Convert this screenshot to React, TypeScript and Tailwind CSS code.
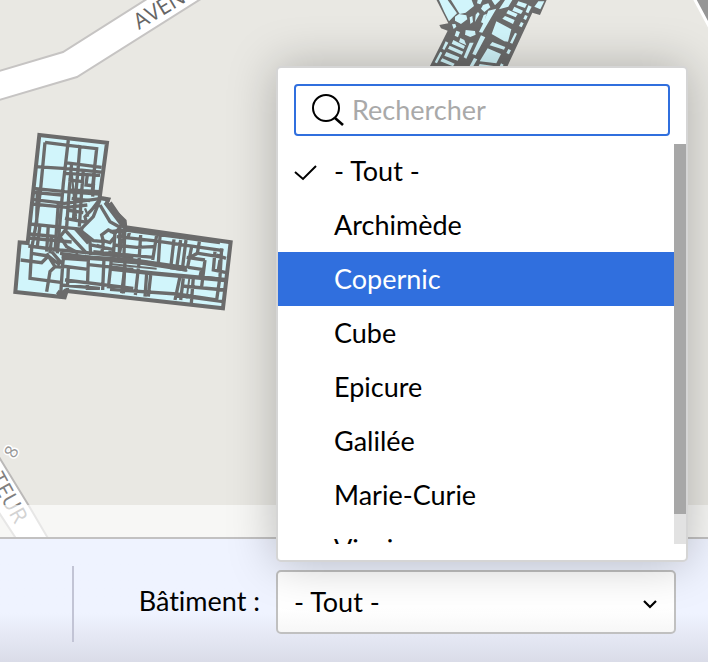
import { useState } from "react";

const BUILDINGS = ["- Tout -", "Archimède", "Copernic", "Cube", "Epicure", "Galilée", "Marie-Curie", "Vinci"];

function CampusMap() {
  return (
    <svg
      className="absolute inset-0 h-full w-full"
      viewBox="0 0 708 537"
      preserveAspectRatio="xMinYMin slice"
      role="img"
      aria-label="Plan du campus"
    >
      <rect width="708" height="537" fill="#e9e8e3" />

      {/* Roads */}
      <path d="M-4 72 63 52 150 -3 204 -3 77 77 -4 101Z" fill="#fff" stroke="#c6c4c3" strokeWidth="2" />
      <path d="M-4 452 29 506 49 540 17 540 -4 508Z" fill="#fff" stroke="#bbb9b8" strokeWidth="2" />
      <path d="M694 -2 710 28 710 -2Z" fill="#969696" stroke="#fff" strokeWidth="3" />
      <g className="font-['Open_Sans']">
        <text x="139" y="30" fontSize="22" fill="#666" transform="rotate(-31 139 30)">AVENUE</text>
        <text x="15" y="525" fontSize="22" fill="#808080" textAnchor="end" transform="rotate(61 15 525)">TEUR</text>
        <text x="10" y="457" fontSize="18" fill="#999" stroke="#fff" strokeWidth="3" paintOrder="stroke" transform="rotate(-62 10 457) translate(0 5)">8</text>
      </g>

      {/* West building */}
      <g transform="translate(0 120) scale(.3333)" stroke="#6b6b6b" strokeWidth="10" fill="none">
        <path
          d="M118 45 321 68 299 233 325 238 320 250 374 303 376 322 692 367 669 565 330 527 200 513 194 532 46 516 59 367 83 369Z"
          fill="#d1f5fb"
          strokeWidth="12"
        />
        <path d="M135 67 205 76 290 86 283 150 278 230M135 67 122 205 108 315 95 385 90 475 182 487M205 60 190 190 172 400M240 75 234 150 220 300M105 140 200 146 312 157M195 128 305 142M195 160 300 166M100 205 195 215 298 222M100 217 185 225M95 238 195 250 300 236M95 252 200 262 262 255M112 210 110 310M88 312 190 322 250 328M88 342 170 350M85 354 215 366M85 378 180 390 400 412" />
        <path d="M215 130 208 205 200 320M250 150 244 230 238 320M205 180 250 185M210 210 298 215M262 165 258 195 285 198M282 160 276 225M215 235 270 242M200 270 250 278M195 295 265 308M120 315 112 378M145 315 140 395M155 350 150 400M175 250 165 395" />
        <path d="M298 240 275 270 255 290 260 310 240 330 270 365 272 405M300 240 280 290 260 310M300 255 330 305 360 322 345 340 325 330 305 345 310 362 330 368 345 350M315 248 365 315M355 300 375 322M330 240 300 235M240 330 280 362 315 365M200 325 180 350 200 380 235 400M225 325 265 370M192 327 260 400M345 335 340 410M272 375 345 390M280 395 400 408M310 365 305 405M360 325 358 400M375 320 372 400" />
        <path d="M62 420 125 428 145 408 180 435M145 408 95 400M155 395 185 430M140 400 165 440 150 455 140 515M165 440 190 442M192 400 188 435 182 525M192 415 265 420 262 510M265 434 400 448M205 445 202 510M195 480 400 505M182 495 300 505M312 415 308 510M335 410 325 505M375 440 365 520M185 438 265 448M180 400 272 412" />
        <path d="M185 408 400 422 560 445M172 515 192 530M175 530 200 510" strokeWidth="14" />
        <path d="M215 160 228 290M225 260 228 300M255 265 265 290M290 375 315 382M325 395 350 400" strokeWidth="7" />
      </g>
      <g transform="translate(110 180) scale(.3333)" stroke="#6b6b6b" strokeWidth="10" fill="none">
        <path d="M0 68 42 130 40 145" strokeWidth="12" />
        <path d="M0 155 45 150 330 188M20 170 130 182 340 212M0 220 130 232M10 195 80 202 130 200M40 155 25 240M60 150 55 170M92 165 86 260M140 165 128 240M150 168 145 250M192 178 182 265M212 180 200 265M228 180 218 260M268 185 262 220 235 235M245 200 232 265" />
        <path d="M0 240 100 248 230 268" strokeWidth="14" />
        <path d="M0 266 130 280 345 300" strokeWidth="13" />
        <path d="M45 245 40 340M85 265 76 345M110 280 105 350M122 285 115 350M210 290 195 360M220 295 212 360M250 292 244 370M0 328 200 342 320 360M195 345 340 365M215 318 345 330M335 205 330 290 320 360M315 215 310 270 350 278M320 225 348 235M285 240 275 320M230 232 285 240M235 262 275 268 270 290 345 300M330 240 325 270M265 220 340 232" />
        <path d="M90 250 230 262M0 252 140 266M180 265 232 272M238 295 230 355" strokeWidth="6" />
      </g>

      {/* North building: dark walls with the rooms laid over them */}
      <g transform="translate(425 0) scale(.3333)">
        <path d="M32 -5 70 70 43 75 48 85 68 92 12 204 245 204 322 38 345 45 367 -5Z" fill="#6b6b6b" />
        <path
          fill="#d1f5fb"
          d="M42 0 68 0 96 40 72 64 58 36Z
            M78 0 140 0 147 18 122 38 104 42Z
            M90 50 102 42 124 46 127 58 108 72 90 62Z
            M158 0 172 0 166 13 156 10Z
            M174 15 190 10 196 22 178 36 168 26Z
            M190 32 214 26 200 50 172 98 162 96 172 76Z
            M200 0 226 0 210 16Z M240 0 262 0 250 20 222 28Z
            M214 64 259 88 249 125 238 124 200 102Z
            M188 145 228 162 214 190 164 184Z
            M250 30 278 42 272 52 244 40Z M240 48 269 60 264 72 232 56Z
            M280 4 306 12 300 24 274 15Z M268 20 294 32 288 42 262 32Z
            M340 4 358 4 346 28 328 20Z M310 16 320 20 310 40 302 36Z
            M300 45 308 48 303 60 295 56Z M288 66 296 70 290 82 282 78Z
            M270 98 276 101 262 131 255 128Z M250 147 258 151 252 163 244 159Z
            M202 126 241 141 237 149 194 136Z
            M94 92 105 96 99 112 89 107Z M122 90 150 93 152 104 136 111 120 104Z
            M106 114 118 120 124 136 102 126Z M85 120 120 138 116 147 80 131Z
            M74 137 115 155 110 164 69 146Z M64 156 103 172 98 182 58 167Z
            M52 175 89 191 84 199 46 184Z
            M168 106 181 112 152 166 142 162Z M147 174 157 178 143 202 132 202Z
            M134 128 146 128 124 176 116 172Z
            M62 124 70 128 58 150 52 146Z M46 155 52 158 36 190 29 187Z
            M81 73 91 72 94 80 86 87Z M152 44 159 36 164 42 150 66Z
            M176 45 185 42 175 70 168 67Z M134 52 142 48 144 66 136 72Z
            M164 192 206 198 202 204 158 204Z M228 190 236 194 230 204 222 204Z"
        />
      </g>
    </svg>
  );
}

function SearchIcon() {
  return (
    <svg className="h-8 w-8 shrink-0" viewBox="0 0 32 32" fill="none" stroke="#000" aria-hidden="true">
      <circle cx="14" cy="14" r="13" strokeWidth="2" />
      <path d="M23 24 31 31" strokeWidth="2.6" />
    </svg>
  );
}

export default function App() {
  const [selected, setSelected] = useState("- Tout -");
  const [active, setActive] = useState("Copernic");
  const [query, setQuery] = useState("");
  const shown = BUILDINGS.filter((name) => name.toLowerCase().includes(query.toLowerCase()));

  return (
    <div className="flex h-screen flex-col overflow-hidden font-[Lato,'Noto_Sans',sans-serif] text-[27px] leading-8 text-black [font-variant-ligatures:none]">
      <main className="relative flex flex-1 flex-col justify-end overflow-hidden">
        <CampusMap />
        <div className="relative h-8 bg-white/65" />
      </main>

      <footer className="flex items-start border-t-2 border-[#c2c1c1] bg-linear-to-b from-[#eff3ff] from-60% to-[#dadce8] pt-[27px] pr-8 pb-5 pl-[72px]">
        <div className="h-[76px] w-0.5 shrink-0 bg-[#c2c4d5]" />
        <label htmlFor="building" className="mt-[19px] mr-4 ml-auto whitespace-nowrap">
          Bâtiment :
        </label>
        <div className="relative mt-1 w-[400px] shrink-0">
          <select
            id="building"
            value={selected}
            onChange={(e) => setSelected(e.target.value)}
            className="h-16 w-full appearance-none rounded-[5px] border-2 border-[#c0c0c0] bg-linear-to-b from-white from-60% to-[#f7f7f7] px-4 outline-none"
          >
            {BUILDINGS.map((name) => (
              <option key={name}>{name}</option>
            ))}
          </select>
          <svg className="pointer-events-none absolute top-[29px] right-[18px] h-2.5 w-4" viewBox="0 0 16 10" fill="none" stroke="#000" strokeWidth="2.2" aria-hidden="true">
            <path d="M2 2 8 8 14 2" />
          </svg>

          <div className="absolute bottom-full left-0 mb-2 w-[412px] rounded-[5px] border-2 border-[#d5d5d5] bg-white pt-4 pb-4 shadow-[0_0_48px_rgba(0,0,0,0.25)]">
            <div className="mx-4 flex h-[52px] items-center gap-2 rounded-[4px] border-2 border-[#306fde] pl-4">
              <SearchIcon />
              <input
                type="text"
                aria-label="Rechercher"
                placeholder="Rechercher"
                value={query}
                onChange={(e) => setQuery(e.target.value)}
                className="w-full min-w-0 bg-transparent outline-none placeholder:text-[#a9a9a9]"
              />
            </div>
            <div className="mt-2 flex h-[400px]">
              <div role="listbox" aria-label="Bâtiment" className="flex-1 overflow-hidden">
                {shown.map((name) => (
                  <button
                    key={name}
                    type="button"
                    role="option"
                    aria-selected={name === selected}
                    onMouseEnter={() => setActive(name)}
                    onClick={() => setSelected(name)}
                    className={`flex h-[54px] w-full items-center pl-4 text-left ${name === active ? "bg-[#306fde] text-white" : ""}`}
                  >
                    <span className="w-10 shrink-0">
                      {name === selected && (
                        <svg className="mt-1 h-4 w-6" viewBox="0 0 24 16" fill="none" stroke="currentColor" strokeWidth="2" aria-hidden="true">
                          <path d="M1 7 9 14 22 1" />
                        </svg>
                      )}
                    </span>
                    {name}
                  </button>
                ))}
              </div>
              <div className="w-3 bg-[#e2e2e2]">
                <div className="h-[370px] bg-[#a7a7a7]" />
              </div>
            </div>
          </div>
        </div>
      </footer>
    </div>
  );
}
